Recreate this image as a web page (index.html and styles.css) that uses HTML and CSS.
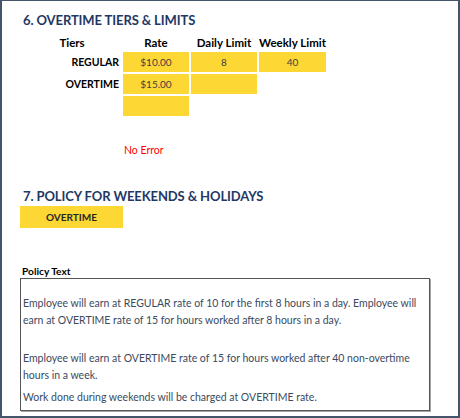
FILE: index.html
```html
<!DOCTYPE html>
<html>
<head>
<meta charset="utf-8">
<link rel="stylesheet" href="styles.css">
</head>
<body>
<div class="frame">
  <h2 class="title title-6">6. OVERTIME TIERS &amp; LIMITS</h2>
  <div class="tiers">
    <div class="hdr">Tiers</div>
    <div class="hdr">Rate</div>
    <div class="hdr">Daily Limit</div>
    <div class="hdr">Weekly Limit</div>

    <div class="lbl">REGULAR</div>
    <div class="cell">$10.00</div>
    <div class="cell">8</div>
    <div class="cell">40</div>

    <div class="lbl">OVERTIME</div>
    <div class="cell">$15.00</div>
    <div class="cell"></div>
    <div class="blank"></div>

    <div class="lbl"></div>
    <div class="cell"></div>
    <div class="blank"></div>
    <div class="blank"></div>

    <div class="lbl"></div>
    <div class="blank"></div>
    <div class="blank"></div>
    <div class="blank"></div>

    <div class="lbl"></div>
    <div class="err">No Error</div>
    <div class="blank"></div>
    <div class="blank"></div>
  </div>

  <h2 class="title title-7">7. POLICY FOR WEEKENDS &amp; HOLIDAYS</h2>
  <div class="policy-choice">OVERTIME</div>

  <div class="policy-label">Policy Text</div>
  <div class="policy-box">
    <p class="p1">Employee will earn at REGULAR rate of 10 for the first 8 hours in a day. Employee will earn at OVERTIME rate of 15 for hours worked after 8 hours in a day.</p>
    <p class="p2">Employee will earn at OVERTIME rate of 15 for hours worked after 40 non-overtime hours in a week.</p>
    <p class="p3">Work done during weekends will be charged at OVERTIME rate.</p>
  </div>
</div>
</body>
</html>
```

FILE: styles.css
```css
* { box-sizing: border-box; }
html, body { margin: 0; padding: 0; background: #fff; }
body {
  font-family: Lato, "Open Sans", sans-serif;
  color: #000;
}
.frame {
  width: 460px;
  height: 418px;
  border-top: 1px solid #44546a;
  border-left: 2px solid #44546a;
  border-right: 2px solid #44546a;
  border-bottom: 2px solid #44546a;
  overflow: hidden;
}
.title {
  margin: 0;
  font-size: 13px;
  letter-spacing: -0.1px;
  line-height: 20px;
  font-weight: 700;
  color: #1f3864;
  padding-left: 21px;
}
.title-6 { margin-top: 9px; }
.tiers {
  display: grid;
  grid-template-columns: 98px 66px 66px 67px;
  grid-template-rows: 20px 20px 20px 20px 20px 20px;
  column-gap: 2px;
  row-gap: 2px;
  margin-left: 21px;
}
.hdr {
  font-size: 11.5px;
  font-weight: 700;
  text-align: center;
  display: flex;
  align-items: flex-end;
  justify-content: center;
  padding-bottom: 1px;
  white-space: nowrap;
}
.lbl {
  font-size: 10.5px;
  font-weight: 700;
  text-align: right;
  display: flex;
  align-items: center;
  justify-content: flex-end;
  padding-right: 2px;
}
.cell {
  background: #fdd835;
  font-size: 10px;
  color: #404040;
  display: flex;
  align-items: center;
  justify-content: center;
}
.err {
  font-size: 10.5px;
  color: #ff0000;
  display: flex;
  align-items: center;
  padding-left: 1px;
  white-space: nowrap;
}
.title-7 { margin-top: 26px; }
.policy-choice {
  margin-left: 18px;
  margin-top: 0;
  width: 103px;
  height: 22px;
  background: #fdd835;
  font-size: 10px;
  font-weight: 700;
  color: #262626;
  display: flex;
  align-items: center;
  justify-content: center;
}
.policy-label {
  margin-left: 20px;
  margin-top: 36px;
  font-size: 10.2px;
  font-weight: 700;
  line-height: 14px;
}
.policy-box {
  margin-left: 18px;
  margin-top: 0;
  width: 410px;
  height: 133px;
  border: 1px solid #555;
  box-shadow: 1px 1px 0 #a6a6a6;
  padding: 16px 4px 0 2px;
  font-size: 10.5px;
  line-height: 17px;
  color: #3b4a5e;
}
.policy-box p { margin: 0; }
.p2 { margin-top: 21px !important; }
.p3 { margin-top: 5px !important; }
```
